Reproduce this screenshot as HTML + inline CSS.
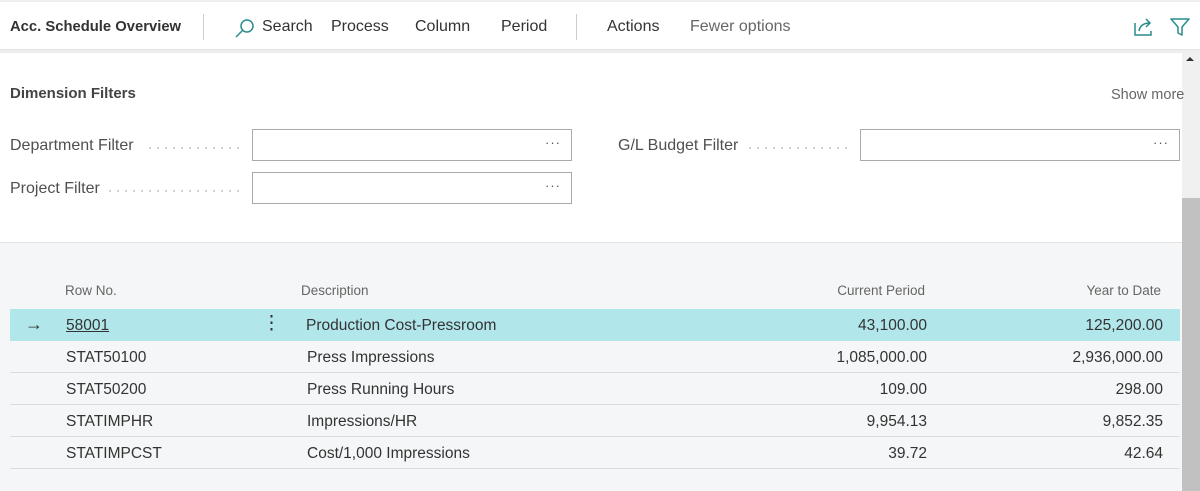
<!DOCTYPE html>
<html><head><style>
*{margin:0;padding:0;box-sizing:border-box}
body{width:1200px;height:491px;overflow:hidden;background:#fff;font-family:"Liberation Sans",sans-serif;color:#333;position:relative}
.a{position:absolute;white-space:nowrap}
.hdr{font-size:15px;color:#333;top:18px}
.lbl{font-size:16px;color:#505050}
.dots{height:2px;background:radial-gradient(circle,#c4c4c4 0.8px,transparent 1.1px) 0 0/8px 2px repeat-x}
.box{position:absolute;border:1px solid #aaa;background:#fff;height:32px}
.box span{position:absolute;right:10px;top:5px;font-size:13px;color:#555;letter-spacing:1px}
.row{position:absolute;left:10px;width:1170px;height:32px;border-bottom:1px solid #dcdcdc;font-size:15.5px;color:#333}
.row .c{position:absolute;top:8px}
.r{text-align:right}
.th{font-size:13.5px;color:#666;top:283px}
</style></head><body>
<div class="a" style="left:0;top:0;width:1200px;height:2px;background:#eee"></div>
<div class="a hdr" style="left:10px;font-weight:bold;font-size:14.8px;top:19px">Acc. Schedule Overview</div>
<div class="a" style="left:203px;top:14px;width:1px;height:26px;background:#ccc"></div>
<svg class="a" style="left:234px;top:18px" width="22" height="20" viewBox="0 0 22 20"><circle cx="13" cy="8" r="6" fill="none" stroke="#2b8c8c" stroke-width="1.5"/><line x1="8.5" y1="12.5" x2="2" y2="19" stroke="#2b8c8c" stroke-width="1.5"/></svg>
<div class="a hdr" style="left:262px;font-size:16px;top:18px">Search</div>
<div class="a hdr" style="left:331px;font-size:16px">Process</div>
<div class="a hdr" style="left:415px;font-size:16px">Column</div>
<div class="a hdr" style="left:501px;font-size:16px">Period</div>
<div class="a" style="left:576px;top:14px;width:1px;height:26px;background:#ccc"></div>
<div class="a hdr" style="left:607px;font-size:16px">Actions</div>
<div class="a hdr" style="left:690px;color:#666;font-size:16px">Fewer options</div>
<svg class="a" style="left:1133px;top:17px" width="22" height="20" viewBox="0 0 22 20"><path d="M2 6v12h16v-4" fill="none" stroke="#2b8c8c" stroke-width="1.5"/><path d="M6 14c1-6 5-8 11-8M13 2l4 4-4 4" fill="none" stroke="#2b8c8c" stroke-width="1.5"/></svg>
<svg class="a" style="left:1170px;top:17px" width="20" height="20" viewBox="0 0 20 20"><path d="M1 2h18l-7 8v8l-4-2v-6z" fill="none" stroke="#2b8c8c" stroke-width="1.5" stroke-linejoin="round"/></svg>
<div class="a" style="left:0;top:49px;width:1200px;height:4px;background:#eee;border-top:1px solid #e4e4e4"></div>
<div class="a" style="left:1182px;top:53px;width:18px;height:438px;background:#f0f0f0"></div>
<div class="a" style="left:1186px;top:57px;width:0;height:0;border-left:4px solid transparent;border-right:4px solid transparent;border-bottom:4px solid #333"></div>
<div class="a" style="left:1182px;top:198px;width:18px;height:293px;background:#c1c1c1"></div>

<div class="a" style="left:10px;top:85px;font-size:15px;font-weight:bold;color:#444">Dimension Filters</div>
<div class="a" style="left:1111px;top:87px;font-size:14.5px;color:#666">Show more</div>

<div class="a lbl" style="left:10px;top:137px">Department Filter</div>
<div class="a dots" style="left:146px;top:147px;width:96px"></div>
<div class="box" style="left:252px;top:129px;width:320px"><span>···</span></div>
<div class="a lbl" style="left:10px;top:180px">Project Filter</div>
<div class="a dots" style="left:106px;top:190px;width:136px"></div>
<div class="box" style="left:252px;top:172px;width:320px"><span>···</span></div>
<div class="a lbl" style="left:618px;top:137px">G/L Budget Filter</div>
<div class="a dots" style="left:746px;top:147px;width:104px"></div>
<div class="box" style="left:860px;top:129px;width:320px"><span>···</span></div>

<div class="a" style="left:0;top:242px;width:1182px;height:249px;background:#f5f6f7;border-top:1px solid #e2e2e2"></div>
<div class="a th" style="left:65px">Row No.</div>
<div class="a th" style="left:301px">Description</div>
<div class="a th r" style="left:780px;width:145px">Current Period</div>
<div class="a th r" style="left:1000px;width:161px">Year to Date</div>

<div class="row" style="top:309px;background:#b1e6ea;border-bottom:none">
<div class="c" style="left:15px;top:5px;font-size:18px">→</div>
<div class="c" style="left:56px;text-decoration:underline">58001</div>
<div class="c" style="left:252px;top:3px;font-size:19px">⋮</div>
<div class="c" style="left:296px">Production Cost-Pressroom</div>
<div class="c r" style="left:760px;width:157px">43,100.00</div>
<div class="c r" style="left:1000px;width:153px">125,200.00</div></div>
<div class="row" style="top:341px"><div class="c" style="left:56px">STAT50100</div><div class="c" style="left:297px">Press Impressions</div><div class="c r" style="left:760px;width:157px">1,085,000.00</div><div class="c r" style="left:1000px;width:153px">2,936,000.00</div></div>
<div class="row" style="top:373px"><div class="c" style="left:56px">STAT50200</div><div class="c" style="left:297px">Press Running Hours</div><div class="c r" style="left:760px;width:157px">109.00</div><div class="c r" style="left:1000px;width:153px">298.00</div></div>
<div class="row" style="top:405px"><div class="c" style="left:56px">STATIMPHR</div><div class="c" style="left:297px">Impressions/HR</div><div class="c r" style="left:760px;width:157px">9,954.13</div><div class="c r" style="left:1000px;width:153px">9,852.35</div></div>
<div class="row" style="top:437px"><div class="c" style="left:56px">STATIMPCST</div><div class="c" style="left:297px">Cost/1,000 Impressions</div><div class="c r" style="left:760px;width:157px">39.72</div><div class="c r" style="left:1000px;width:153px">42.64</div></div>
</body></html>
